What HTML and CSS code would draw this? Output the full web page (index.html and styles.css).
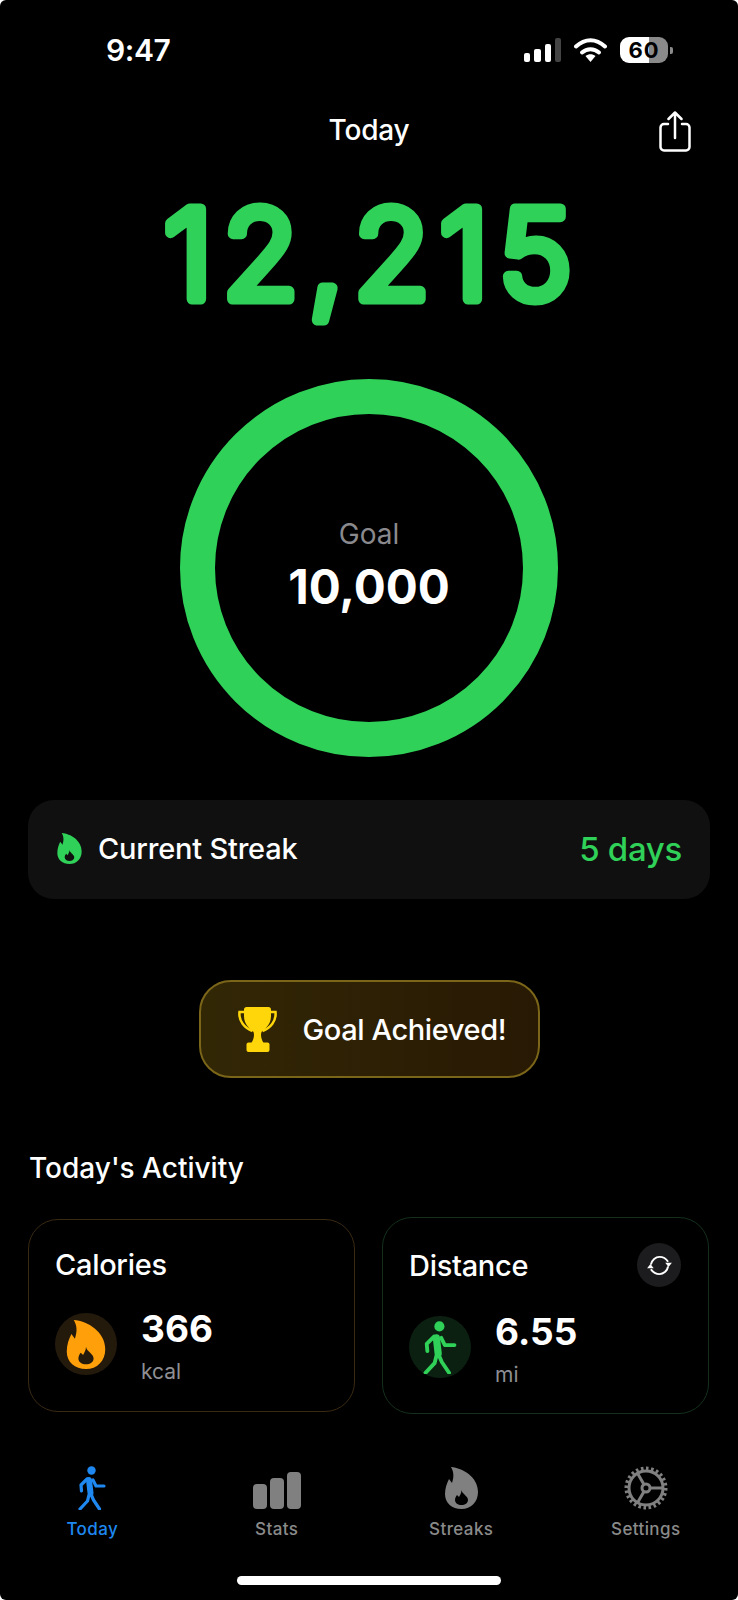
FILE: index.html
```html
<!DOCTYPE html>
<html lang="en">
<head>
<meta charset="utf-8">
<title>Today</title>
<link rel="stylesheet" href="styles.css">
</head>
<body>
<main class="screen">
  <header class="status">
    <span class="time">9:47</span>
    <div class="status-icons">
      <div class="signal"><i class="b1"></i><i class="b2"></i><i class="b3"></i><i class="b4"></i></div>
      <svg class="wifi" viewBox="0 0 33 25"><path class="wifi-arc" d="M2 9.500C11 1 22 1 31 9.500"/><path class="wifi-arc" d="M8 15.500C13 11 20 11 25 15.500"/><path class="wifi-dot" d="M11.500 19C14.500 16.500 18.500 16.500 21.500 19L16.500 25Z"/></svg>
      <div class="battery"><div class="battery-body"><span>60</span></div><i class="battery-cap"></i></div>
    </div>
  </header>

  <nav class="nav">
    <h1 class="nav-title">Today</h1>
    <svg class="share" viewBox="0 0 32 41"><path d="M9 13H5a3.500 3.500 0 0 0-3.500 3.500V36a3.500 3.500 0 0 0 3.500 3.500H27a3.500 3.500 0 0 0 3.500-3.500V16.500A3.500 3.500 0 0 0 27 13H23"/><path d="M16 27V2M9.500 8L16 1.500L22.500 8"/></svg>
  </nav>

  <svg class="hero" viewBox="0 0 738 165"><text x="373" y="129" text-anchor="middle">12,215</text></svg>

  <section class="ring">
    <span class="ring-label">Goal</span>
    <span class="ring-value">10,000</span>
  </section>

  <section class="streak">
    <div class="streak-left">
      <svg class="flame-small" viewBox="0 0 33 42"><path class="flame" fill-rule="evenodd" d="M6 0C18 1 33 10 33 25C33 35 26 42 16.500 42C7 42 0 36 0 27C0 21 2 16 4 12L7 16C9 10 9 5 6 0ZM16.500 23C17 27 23 29 23 33C23 36 20 38 16.500 38C13 38 10 36 10 33C10 31 11 29 12 28L14 30C15 28 16.500 26 16.500 23Z"/></svg>
      <span class="streak-label">Current Streak</span>
    </div>
    <span class="streak-value">5 days</span>
  </section>

  <section class="badge">
    <svg class="trophy" viewBox="0 0 40 45"><path class="trophy-handle" d="M7 5H2C1 14 7 21 15 24M33 5H38C39 14 33 21 25 24"/><path class="trophy-fill" d="M9 0H31C32.500 0 33.500 1 33.500 2.500V9C33.500 18 27 22 24 25C23 28 23.500 32 26 36H14C16.500 32 17 28 16 25C13 22 6.500 18 6.500 9V2.500C6.500 1 7.500 0 9 0Z"/><rect class="trophy-fill" x="9" y="35.500" width="23" height="9.500" rx="2"/></svg>
    <span class="badge-text">Goal Achieved!</span>
  </section>

  <h2 class="section-title">Today's Activity</h2>

  <section class="cards">
    <article class="card card-cal">
      <div class="card-head"><span class="card-title">Calories</span></div>
      <div class="card-body">
        <div class="disc disc-cal">
          <svg class="disc-flame" viewBox="0 0 33 42"><path class="flame-orange" fill-rule="evenodd" d="M6 0C18 1 33 10 33 25C33 35 26 42 16.500 42C7 42 0 36 0 27C0 21 2 16 4 12L7 16C9 10 9 5 6 0ZM16.500 23C17 27 23 29 23 33C23 36 20 38 16.500 38C13 38 10 36 10 33C10 31 11 29 12 28L14 30C15 28 16.500 26 16.500 23Z"/></svg>
        </div>
        <div class="metric"><span class="metric-value">366</span><span class="metric-unit">kcal</span></div>
      </div>
    </article>
    <article class="card card-dist">
      <div class="card-head">
        <span class="card-title">Distance</span>
        <div class="refresh">
          <svg viewBox="0 0 26 22"><path d="M4 10C5 5 9 2 13 2C17 2 20 4 22 7M22 12C21 17 17 20 13 20C9 20 6 18 4 15"/><path class="refresh-tip" d="M19 8H26L22.500 12.500ZM0 14H7L3.500 9.500Z"/></svg>
        </div>
      </div>
      <div class="card-body">
        <div class="disc disc-dist">
          <svg class="walker walker-green" viewBox="0 0 28 44"><circle cx="13.500" cy="4.500" r="4.200"/><path class="w-torso" d="M11 14L12.500 27"/><path class="w-limb" d="M9 13L3 19L3.500 25M15 14L18 20H26M11 29L9.500 35L2 43M12.500 27L15.500 34L21.500 43"/></svg>
        </div>
        <div class="metric"><span class="metric-value">6.55</span><span class="metric-unit">mi</span></div>
      </div>
    </article>
  </section>

  <footer class="tabs">
    <div class="tab tab-active">
      <div class="tab-icon"><svg class="walker walker-blue" viewBox="0 0 28 44"><circle cx="13.500" cy="4.500" r="4.200"/><path class="w-torso" d="M11 14L12.500 27"/><path class="w-limb" d="M9 13L3 19L3.500 25M15 14L18 20H26M11 29L9.500 35L2 43M12.500 27L15.500 34L21.500 43"/></svg></div>
      <span class="tab-label">Today</span>
    </div>
    <div class="tab">
      <div class="tab-icon"><div class="bars"><i class="bar1"></i><i class="bar2"></i><i class="bar3"></i></div></div>
      <span class="tab-label">Stats</span>
    </div>
    <div class="tab">
      <div class="tab-icon"><svg class="tab-flame" viewBox="0 0 33 42"><path class="flame-gray" fill-rule="evenodd" d="M6 0C18 1 33 10 33 25C33 35 26 42 16.500 42C7 42 0 36 0 27C0 21 2 16 4 12L7 16C9 10 9 5 6 0ZM16.500 23C17 27 23 29 23 33C23 36 20 38 16.500 38C13 38 10 36 10 33C10 31 11 29 12 28L14 30C15 28 16.500 26 16.500 23Z"/></svg></div>
      <span class="tab-label">Streaks</span>
    </div>
    <div class="tab">
      <div class="tab-icon"><svg class="gear" viewBox="0 0 44 44"><circle class="gear-teeth" cx="22" cy="22" r="19.500" pathLength="96" stroke-dasharray="2 2"/><circle class="gear-line" cx="22" cy="22" r="17"/><circle class="gear-line" cx="22" cy="22" r="4"/><path class="gear-line" d="M26 22H39M20 18.500L13.500 7.300M20 25.500L13.500 36.700"/></svg></div>
      <span class="tab-label">Settings</span>
    </div>
  </footer>

  <div class="home-indicator"></div>
</main>
</body>
</html>
```

FILE: styles.css
```css
* { box-sizing: border-box; }
html { background: #fff; }
body { margin: 0; }
.screen {
  width: 738px; height: 1600px; background: #000; color: #fff;
  border-radius: 6px; overflow: hidden;
  display: flex; flex-direction: column;
  font-family: Inter, "Liberation Sans", sans-serif;
}

/* status bar */
.status { display: flex; justify-content: space-between; align-items: flex-start; height: 63px; padding: 37px 65px 0 106px; }
.time { font-size: 30px; font-weight: 600; line-height: 26px; letter-spacing: -0.4px; }
.status-icons { display: flex; align-items: flex-start; }
.signal { display: flex; align-items: flex-end; gap: 4px; width: 37px; height: 24px; margin: 1px 13px 0 0; }
.signal i { width: 6.500px; border-radius: 2px; background: #fff; }
.b1 { height: 9px; } .b2 { height: 13px; } .b3 { height: 18px; }
.signal .b4 { height: 24px; background: #444; }
.wifi { width: 33px; height: 25px; margin-right: 13px; }
.wifi-arc { fill: none; stroke: #fff; stroke-width: 4px; stroke-linecap: round; }
.wifi-dot { fill: #fff; }
.battery { display: flex; align-items: center; height: 26px; }
.battery-body { width: 48px; height: 26px; border-radius: 9px; background: linear-gradient(90deg, #fff 60%, #8a8a8a 60%); color: #000; font-size: 22px; font-weight: 700; text-align: center; line-height: 26px; letter-spacing: 1px; }
.battery-cap { width: 3px; height: 7px; margin-left: 2px; border-radius: 0 2px 2px 0; background: #8a8a8a; }

/* nav */
.nav { display: grid; grid-template-columns: 1fr auto 1fr; align-items: center; height: 41px; margin-top: 48px; padding-right: 47px; }
.nav-title { grid-column: 2; margin: 0 0 4px; font-size: 28px; font-weight: 500; letter-spacing: -0.2px; padding-left: 47px; }
.share { grid-column: 3; justify-self: end; width: 32px; height: 41px; fill: none; stroke: #fff; stroke-width: 2.500px; stroke-linecap: round; stroke-linejoin: round; }

/* hero */
.hero { display: block; width: 738px; height: 165px; margin-top: 18px; flex: none; }
.hero text { font-size: 124px; font-weight: 300; letter-spacing: 10px; fill: #30d158; stroke: #30d158; stroke-width: 11px; stroke-linejoin: round; }

/* ring */
.ring { flex: none; align-self: center; width: 378px; height: 378px; margin-top: 44px; border: 35px solid #30d158; border-radius: 50%; display: flex; flex-direction: column; align-items: center; justify-content: center; padding-bottom: 2px; }
.ring-label { font-size: 28px; font-weight: 400; color: #8a8a8e; line-height: 32px; }
.ring-value { font-size: 47.500px; font-weight: 700; line-height: 58px; margin-top: 7.500px; }

/* streak */
.streak { flex: none; display: flex; justify-content: space-between; align-items: center; height: 99px; margin: 43px 28px 0 28px; padding: 0 28px 2px; background: #101010; border-radius: 26px; }
.streak-left { display: flex; align-items: center; gap: 16px; }
.flame-small { width: 25px; height: 31px; margin-left: 1px; }
.flame { fill: #30d158; }
.streak-label { font-size: 29px; font-weight: 500; letter-spacing: -0.2px; }
.streak-value { font-size: 33px; font-weight: 500; color: #30d158; letter-spacing: -0.3px; }

/* badge */
.badge { flex: none; align-self: center; display: flex; align-items: center; gap: 25px; width: 341px; height: 98px; margin-top: 81px; padding-left: 36px; border: 2px solid #7a6518; border-radius: 32px; background: linear-gradient(90deg, #322705, #281904); }
.trophy { width: 41px; height: 45px; flex: none; }
.trophy-handle { fill: none; stroke: #ffd60a; stroke-width: 2.500px; }
.trophy-fill { fill: #ffd60a; }
.badge-text { font-size: 29px; font-weight: 500; letter-spacing: -0.4px; white-space: nowrap; }

/* activity */
.section-title { flex: none; margin: 72px 0 0 29px; font-size: 28px; font-weight: 500; line-height: 36px; letter-spacing: 0; }
.cards { flex: none; display: grid; grid-template-columns: 327px 327px; gap: 27px; align-items: center; margin: 31px 0 0 28px; }
.card { border-radius: 30px; border: 1.500px solid; padding: 0 26px; }
.card-cal { border-color: #3a2a12; height: 193px; padding-top: 22px; }
.card-dist { border-color: #14301c; height: 197px; padding-top: 25px; }
.card-head { display: flex; justify-content: space-between; align-items: center; height: 44px; }
.card-title { font-size: 29px; font-weight: 500; letter-spacing: -0.3px; }
.refresh { width: 44px; height: 44px; border-radius: 50%; background: #1c1c1e; display: flex; align-items: center; justify-content: center; margin-right: 1px; }
.refresh svg { width: 25px; height: 21px; fill: none; stroke: #fff; stroke-width: 2px; }
.refresh .refresh-tip { fill: #fff; stroke: none; }
.card-body { display: flex; gap: 24px; margin-top: 27px; }
.card-dist .card-body { margin-top: 29px; }
.disc { width: 62px; height: 62px; border-radius: 50%; display: flex; align-items: center; justify-content: center; flex: none; }
.disc-cal { background: #241a0c; }
.disc-dist { background: #0c2012; }
.disc-flame { width: 40px; height: 49px; }
.flame-orange { fill: #ff9f0a; }
.metric { display: flex; flex-direction: column; margin-top: -2px; }
.metric-value { font-size: 37px; font-weight: 700; line-height: 36px; }
.metric-unit { font-size: 21px; color: #8e8e93; line-height: 26px; margin-top: 12px; }

.walker { width: 28px; height: 44px; fill: none; stroke-linecap: round; stroke-linejoin: round; }
.disc .walker { width: 34px; height: 53px; }
.w-torso { stroke-width: 6px; }
.w-limb { stroke-width: 3.200px; }
.walker-green circle { fill: #30d158; }
.walker-green path { stroke: #30d158; }
.walker-blue circle { fill: #1e88f0; }
.walker-blue path { stroke: #1e88f0; }

/* tabs */
.tabs { flex: none; display: grid; grid-template-columns: repeat(4, 1fr); margin-top: 51px; }
.tab { display: flex; flex-direction: column; align-items: center; color: #8a8a8a; }
.tab-active { color: #1e88f0; }
.tab-icon { height: 46px; display: flex; align-items: center; justify-content: center; }
.tab-label { font-size: 17px; font-weight: 500; line-height: 22px; margin-top: 7px; letter-spacing: 0.4px; }
.bars { display: flex; align-items: flex-end; gap: 3px; margin-top: 4px; }
.bars i { width: 14px; border-radius: 4px; background: #808080; }
.bar1 { height: 25px; } .bar2 { height: 31px; } .bar3 { height: 37px; }
.tab-flame { width: 33px; height: 42px; }
.flame-gray { fill: #808080; }
.gear { width: 44px; height: 44px; fill: none; }
.gear-teeth { stroke: #808080; stroke-width: 4px; }
.gear-line { stroke: #808080; stroke-width: 3px; }

.home-indicator { flex: none; align-self: center; width: 264px; height: 9px; margin-top: 36px; border-radius: 5px; background: #fff; }
```
